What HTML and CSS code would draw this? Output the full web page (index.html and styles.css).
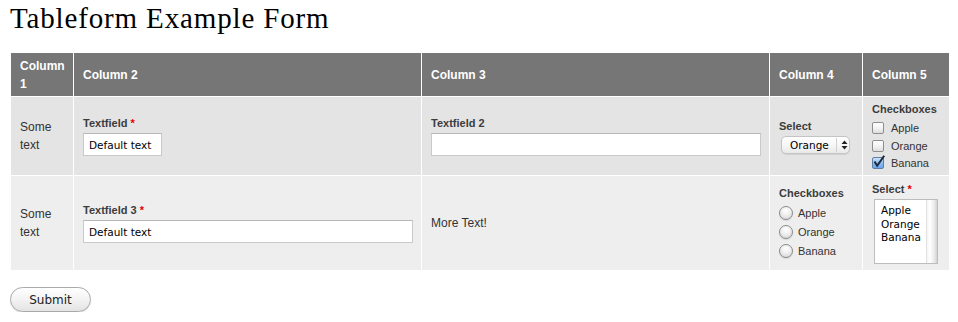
FILE: index.html
```html
<!DOCTYPE html>
<html>
<head>
<meta charset="utf-8">
<title>Tableform Example Form</title>
<link rel="stylesheet" href="styles.css">
</head>
<body>
<h1 class="title">Tableform Example Form</h1>
<form class="form">
<table class="grid">
<thead>
<tr class="head-row">
<th class="c1">Column 1</th>
<th class="c2">Column 2</th>
<th class="c3">Column 3</th>
<th class="c4">Column 4</th>
<th class="c5">Column 5</th>
</tr>
</thead>
<tbody>
<tr class="row-a">
<td class="plain">Some text</td>
<td>
<div class="field">
<label class="lbl">Textfield <span class="req">*</span></label>
<input class="text short" type="text" value="Default text">
</div>
</td>
<td>
<div class="field">
<label class="lbl">Textfield 2</label>
<input class="text long" type="text" value="">
</div>
</td>
<td>
<div class="field">
<label class="lbl">Select</label>
<div class="select">
<span class="select-val">Orange</span>
<span class="select-sep"></span>
<svg class="select-arrows" width="7" height="10" viewBox="0 0 7 10"><path d="M3.5 0.5 L6.5 4 L0.5 4 Z M3.5 9.5 L6.5 6 L0.5 6 Z" fill="#222"/></svg>
</div>
</div>
</td>
<td>
<div class="field checks">
<label class="lbl">Checkboxes</label>
<div class="opt"><span class="cbox"></span><span>Apple</span></div>
<div class="opt"><span class="cbox"></span><span>Orange</span></div>
<div class="opt"><span class="cbox on"><svg class="tick" width="14" height="14" viewBox="0 0 14 14"><path d="M2.5 6.5 L5.2 10.8 L12.2 0.8" fill="none" stroke="#1a2a40" stroke-width="2"/></svg></span><span>Banana</span></div>
</div>
</td>
</tr>
<tr class="row-b">
<td class="plain">Some text</td>
<td>
<div class="field">
<label class="lbl">Textfield 3 <span class="req">*</span></label>
<input class="text long2" type="text" value="Default text">
</div>
</td>
<td class="plain">More Text!</td>
<td>
<div class="field">
<label class="lbl">Checkboxes</label>
<div class="ropt"><span class="radio"></span><span>Apple</span></div>
<div class="ropt"><span class="radio"></span><span>Orange</span></div>
<div class="ropt"><span class="radio"></span><span>Banana</span></div>
</div>
</td>
<td>
<div class="field">
<label class="lbl">Select <span class="req">*</span></label>
<div class="listbox">
<div class="list-items">
<div>Apple</div>
<div>Orange</div>
<div>Banana</div>
</div>
<div class="list-scroll"></div>
</div>
</div>
</td>
</tr>
</tbody>
</table>
<button class="submit" type="button">Submit</button>
</form>
</body>
</html>
```
FILE: styles.css
```css
* { box-sizing: border-box; }

body {
  margin: 0;
  padding: 0 10px;
  background: #fff;
  color: #333;
  font-family: "Liberation Sans", Arial, sans-serif;
  font-size: 12px;
}

.title {
  margin: 2px 0 18px 0;
  font-family: "Liberation Serif", "Times New Roman", serif;
  font-weight: normal;
  font-size: 29px;
  line-height: 32px;
  letter-spacing: 0.85px;
  color: #000;
}

.form { margin: 0; }

.grid {
  border-collapse: separate;
  border-spacing: 1px;
  table-layout: fixed;
  width: 940px;
}

.grid th,
.grid td {
  padding: 0 4px 0 9px;
  vertical-align: middle;
  text-align: left;
}

.c1 { width: 62px; }
.c2 { width: 347px; }
.c3 { width: 347px; }
.c4 { width: 92px; }
.c5 { width: 86px; }

.head-row { height: 43px; }
.grid th {
  background: #767676;
  color: #fff;
  font-weight: bold;
  font-size: 12px;
  line-height: 18px;
}

.row-a { height: 78px; }
.row-a td { background: #e4e4e4; }
.row-b { height: 94px; }
.row-b td { background: #eeeeee; }

.plain {
  font-size: 12px;
  line-height: 18px;
  color: #333;
}

.lbl {
  display: block;
  font-weight: bold;
  font-size: 11px;
  line-height: 14px;
  color: #3c3c3c;
  margin-bottom: 3px;
}

.req { color: #e60000; }

.text {
  display: block;
  height: 23px;
  margin: 0;
  padding: 0 5px;
  border: 1px solid #c9c9c9;
  border-top-color: #b8b8b8;
  background: #fff;
  font-family: "DejaVu Sans", sans-serif;
  font-size: 10.5px;
  color: #000;
  outline: none;
}
.short { width: 79px; }
.long { width: 330px; }
.long2 { width: 330px; }

.select {
  display: flex;
  align-items: center;
  width: 69px;
  height: 18px;
  margin: 1px 0 0 2px;
  border: 1px solid #c4c4c4;
  border-radius: 5px;
  background: linear-gradient(#ffffff, #f7f7f7 50%, #e9e9e9);
  box-shadow: 0 1px 1px rgba(0, 0, 0, 0.08);
  font-family: "DejaVu Sans", sans-serif;
  font-size: 10.5px;
  color: #000;
}
.select-val { padding-left: 8px; width: 54px; }
.select-sep { width: 1px; height: 14px; background: #d0d0d0; }
.select-arrows { margin-left: 4px; }

.checks { margin-top: 2px; }
.opt {
  display: flex;
  align-items: center;
  height: 17.5px;
  font-size: 11px;
  color: #333;
}
.cbox {
  position: relative;
  width: 12px;
  height: 12px;
  margin-right: 7px;
  border: 1px solid #8e8e8e;
  border-radius: 2px;
  background: linear-gradient(#ffffff, #f1f1f1 55%, #dedede);
}
.cbox.on {
  border-color: #5f7ea6;
  background: linear-gradient(#cfe3fa, #8dbbf0 50%, #6aa6ec);
}
.tick {
  position: absolute;
  left: -1px;
  top: -3px;
}

.ropt {
  display: flex;
  align-items: center;
  height: 19px;
  font-size: 11px;
  color: #333;
}
.radio {
  width: 14px;
  height: 14px;
  margin-right: 5px;
  border: 1px solid #8a8a8a;
  border-radius: 50%;
  background: radial-gradient(circle at 50% 30%, #ffffff 0%, #efefef 45%, #cfcfcf 100%);
  box-shadow: 0 1px 1px rgba(0, 0, 0, 0.1);
}

.listbox {
  display: flex;
  width: 64px;
  height: 65px;
  margin-left: 2px;
  border: 1px solid #bdbdbd;
  background: #fff;
}
.list-items {
  flex: 1;
  padding: 4px 0 0 6px;
  font-family: "DejaVu Sans", sans-serif;
  font-size: 10.5px;
  line-height: 13.7px;
  color: #000;
}
.list-scroll {
  width: 11px;
  border-left: 1px solid #e2e2e2;
  background: linear-gradient(to right, #f4f4f4, #ffffff 30%, #e8e8e8 75%, #d2d2d2);
}

.submit {
  display: block;
  width: 81px;
  height: 25px;
  margin: 16px 0 0 0;
  padding: 0;
  border: 1px solid #a9a9a9;
  border-radius: 13px;
  background: linear-gradient(#ffffff, #f3f3f3 50%, #e3e3e3);
  box-shadow: 0 1px 1px rgba(0, 0, 0, 0.12);
  font-family: "DejaVu Sans", sans-serif;
  font-size: 12px;
  color: #222;
}
```
